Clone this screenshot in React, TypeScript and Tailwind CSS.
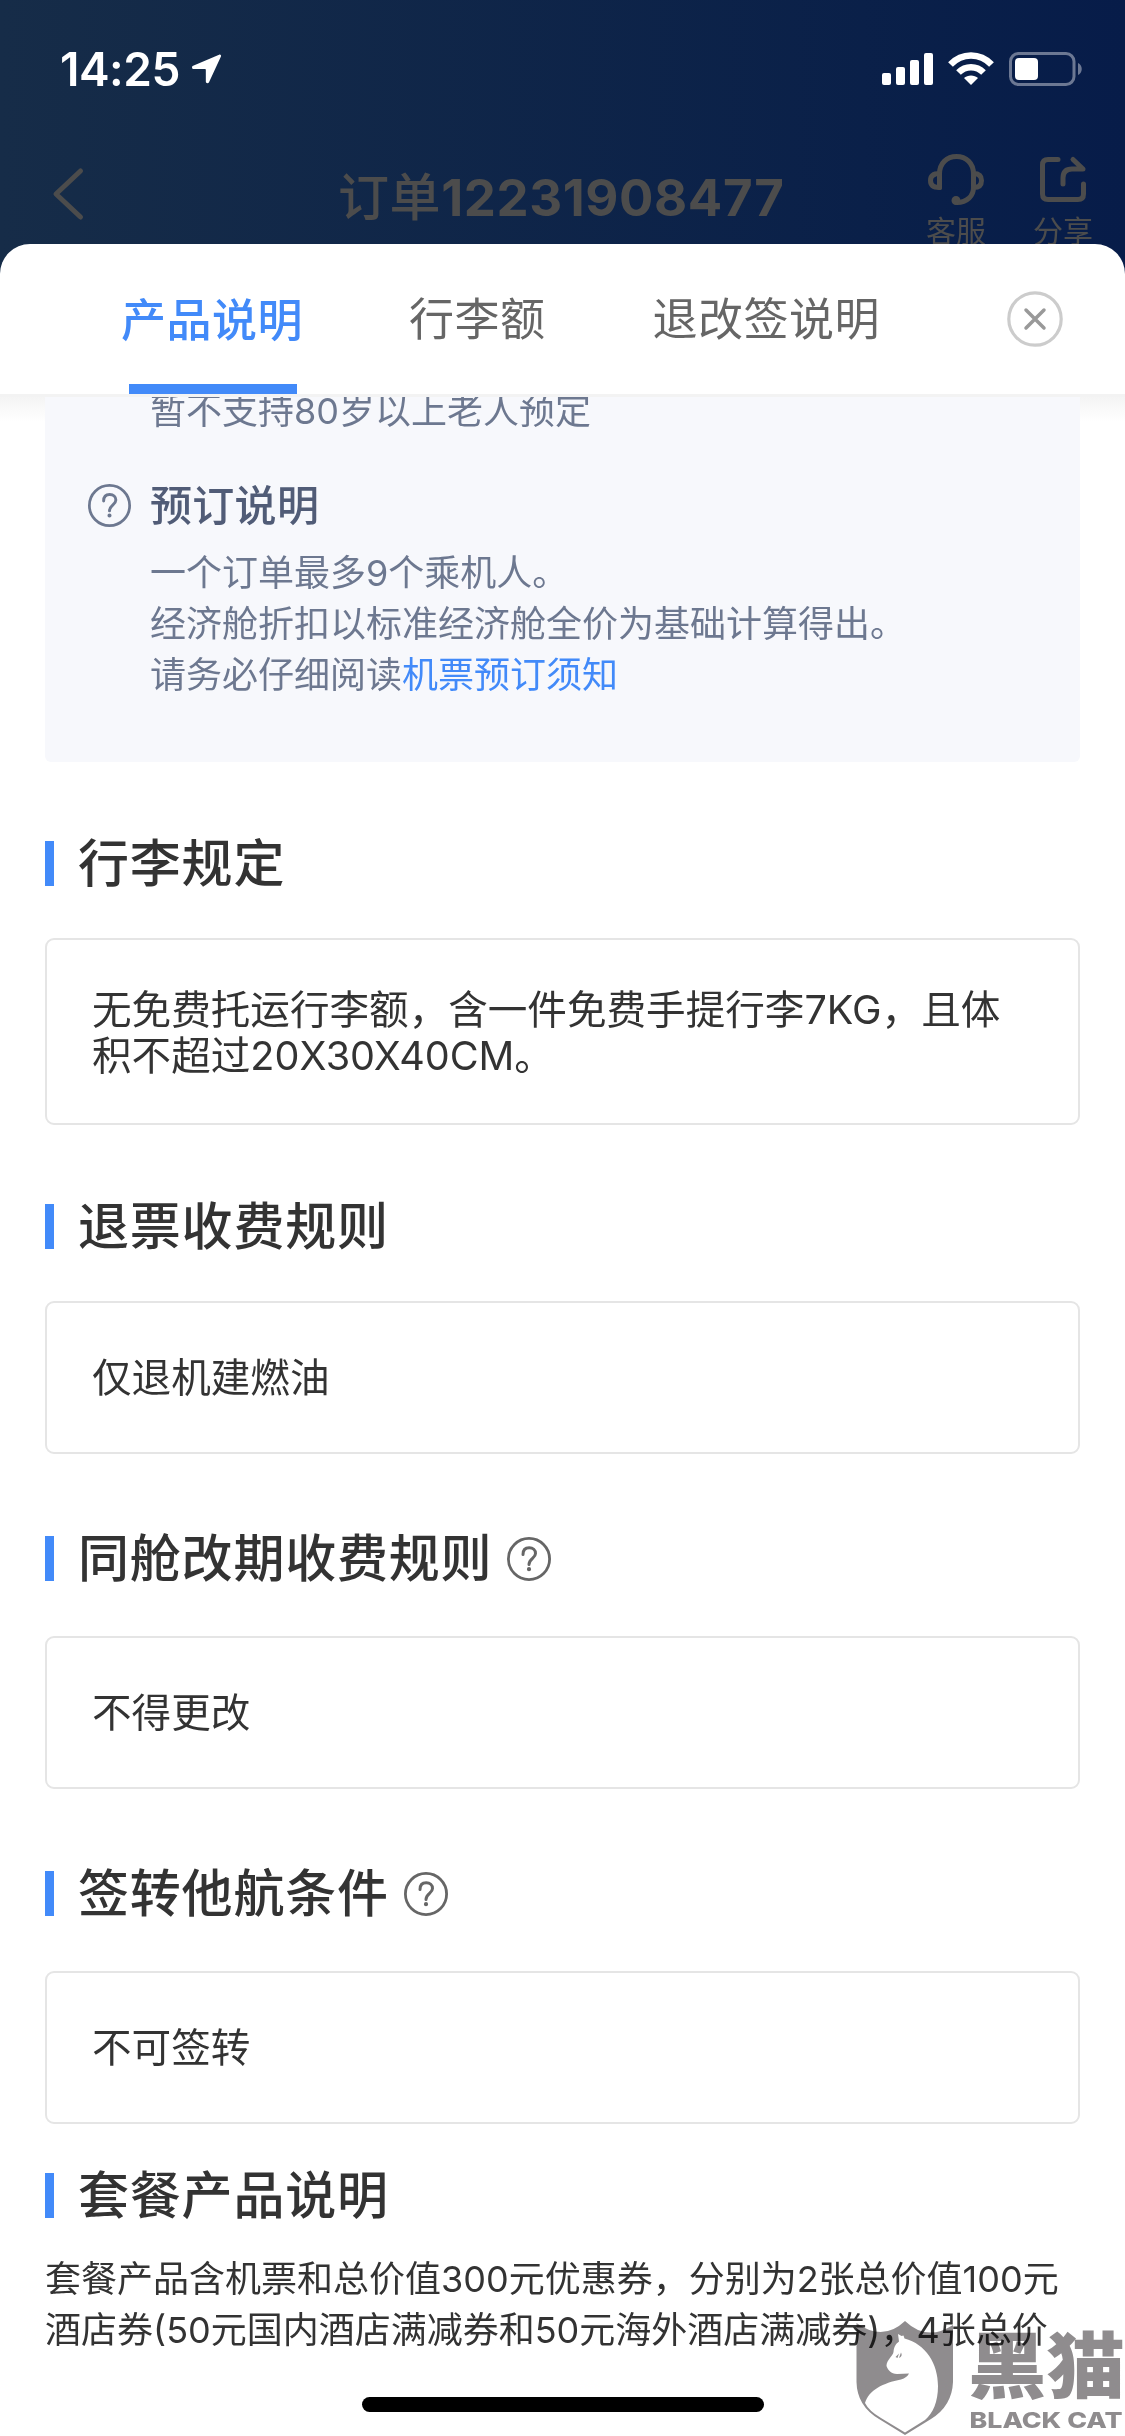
import { ReactNode } from "react";

const QuestionIcon = ({ size }: { size: number }) => {
    return (
        <svg width={size} height={size} viewBox="0 0 44 44" fill="none" stroke="currentColor" strokeLinecap="round">
            <circle cx="22" cy="22" r="20.6" strokeWidth="2.8" />
            <path d="M16 17.4C16 13 18.500 10.700 22.200 10.700C26 10.700 28.500 13 28.500 16.400C28.500 21.200 22 21.500 22 27.500" strokeWidth="3" />
            <circle cx="22" cy="32.200" r="1.200" fill="currentColor" strokeWidth="1.8" />
        </svg>
    );
};

const StatusBar = () => {
    return (
        <div className="flex h-[137px] items-center justify-between pr-[43px] pl-[60px] text-white">
            <div className="flex items-center gap-[11px]">
                <span className="text-[46px] leading-[46px] font-semibold tracking-[-0.5px]">14:25</span>
                <svg width="31" height="32" viewBox="0 0 32 32" fill="currentColor">
                    <path d="M29 1.2L2.2 12.6C.4 13.4.9 16 2.8 16H14.5C15 16 15.3 16.3 15.3 16.8V29C15.3 31 17.8 31.4 18.6 29.7L30.9 3.2C31.5 1.8 30.4.6 29 1.2Z" />
                </svg>
            </div>
            <svg width="200" height="34" viewBox="882 52 200 34" fill="currentColor">
                <rect x="882" y="73" width="9" height="12" rx="2" />
                <rect x="896" y="67" width="9" height="18" rx="2" />
                <rect x="910" y="60" width="9" height="25" rx="2" />
                <rect x="924" y="53" width="9" height="32" rx="2" />
                <path d="M971 85L978 78C974.500 74.500 967.500 74.500 964 78Z" />
                <g fill="none" stroke="currentColor" strokeWidth="6.6">
                    <path d="M950.500 64.500C962 52.500 980 52.500 991.500 64.500" />
                    <path d="M958.500 72.500C965.500 65.500 976.500 65.500 983.500 72.500" />
                </g>
                <rect x="1010.500" y="53.500" width="63.500" height="31" rx="8" fill="none" stroke="#6c7893" strokeWidth="3" />
                <rect x="1015" y="58" width="23" height="22" rx="4" />
                <path d="M1078 63C1083 65 1083 73 1078 75Z" fill="#6c7893" />
            </svg>
        </div>
    );
};

const NavBar = () => {
    return (
        <div className="flex h-[107px] items-start overflow-hidden pr-[32px] pl-[52px] text-[#4c4c4c]">
            <svg className="mt-[30px]" width="34" height="54" viewBox="0 0 34 54" fill="none" stroke="currentColor" strokeWidth="5" strokeLinecap="round" strokeLinejoin="round">
                <path d="M28.500 4L4 27L28.500 50" />
            </svg>
            <h1 className="mt-[29px] ml-[252px] text-[51px] leading-[64px] font-medium tracking-[0.6px]">
                订单<span className="font-bold">12231908477</span>
            </h1>
            <div className="ml-auto flex gap-[47px] text-[30px] leading-[36px]">
                <div className="flex flex-col items-center">
                    <svg className="mt-[15px]" width="60" height="56" viewBox="926 152 60 56" fill="none" stroke="currentColor" strokeWidth="5" strokeLinecap="round" strokeLinejoin="round">
                        <path d="M939.500 187.500V174C939.500 163 947 156.500 956.500 156.500C966 156.500 973.500 163 973.500 174V187.500C973.500 196 967 202.500 957 202.500" />
                        <path d="M939.500 173.500C933 173.500 930.500 176 930.500 180.500C930.500 185 933 187.500 939.500 187.500" />
                        <path d="M973.500 173.500C979 173.500 981.500 176 981.500 180.500C981.500 185 979 187.500 973.500 187.500" />
                        <circle cx="956" cy="200.500" r="2" fill="currentColor" />
                    </svg>
                    <span className="mt-[5px]">客服</span>
                </div>
                <div className="flex flex-col items-center">
                    <svg className="mt-[15px]" width="60" height="56" viewBox="1033 152 60 56" fill="none" stroke="currentColor" strokeWidth="5" strokeLinecap="round" strokeLinejoin="round">
                        <path d="M1058 159.500H1048C1044 159.500 1042.500 161.500 1042.500 165V194C1042.500 197.500 1044.500 199.500 1048 199.500H1078C1081.500 199.500 1083.500 197.500 1083.500 194V184" />
                        <path d="M1063 184V178C1063 172 1066 169 1072 169H1083L1073 159.500" />
                    </svg>
                    <span className="mt-[5px]">分享</span>
                </div>
            </div>
        </div>
    );
};

const Tabs = () => {
    return (
        <div className="flex h-[150px] items-center rounded-t-[30px] bg-white pl-[121px] text-[45px] leading-[60px] tracking-[0.5px] text-[#666]">
            <div className="flex h-[150px] w-[182px] flex-col items-center text-[#428af9]">
                <span className="mt-[47px] font-medium">产品说明</span>
                <span className="mt-auto ml-[2px] h-[10px] w-[168px] bg-[#428af9]" />
            </div>
            <span className="mt-[2px] ml-[106px]">行李额</span>
            <span className="mt-[2px] ml-[107px]">退改签说明</span>
            <button className="mr-[61px] ml-auto">
                <svg width="58" height="58" viewBox="0 0 58 58" fill="none" strokeLinecap="round">
                    <circle cx="29" cy="29" r="26.200" stroke="#ccc" strokeWidth="3.200" />
                    <path d="M20 20L38 38M38 20L20 38" stroke="#999" strokeWidth="3.500" />
                </svg>
            </button>
        </div>
    );
};

type SectionProps = {
    title: string;
    help?: boolean;
    children: ReactNode;
};

const SectionTitle = ({ title, help }: { title: string; help?: boolean }) => {
    return (
        <h2 className="flex h-[45px] items-center text-[51px] font-medium text-[#333]">
            <span className="mr-[24px] h-[45px] w-[9px] bg-[#428af9]" />
            <span className="mt-px tracking-[0.8px]">{title}</span>
            {help && (
                <span className="ml-[15px] text-[#666]">
                    <QuestionIcon size={44} />
                </span>
            )}
        </h2>
    );
};

const Section = ({ title, help, children }: SectionProps) => {
    return (
        <section>
            <SectionTitle title={title} help={help} />
            {children}
        </section>
    );
};

const cardClass = "rounded-[9px] border-2 border-[#e5e5e5] bg-white px-[45px] text-[39.6px] leading-[46px] text-[#333]";

// watermark over the bottom right corner
const BlackCat = () => {
    return (
        <svg className="absolute right-0 bottom-0 mix-blend-multiply" width="280" height="126" viewBox="0 0 280 126" fill="#8f8c8e">
            <path d="M11.500 13Q38 32 60 11Q82 32 108 15V72Q107 96 86 109L60 125L34 109Q12 96 11.500 72Z" />
            <path
                d="M53 24L56.500 26L58.500 25.500L59.500 28.500C81 34 93 54 93 76C93 92 88 103 80 110L60 122.500L36 108Q24 101 20 93C24 80 38 73 56 69.500Q62 67.500 64 63.500L52 64C46 64 43 60 41.500 56C41.500 50 48 46 48.500 42C49 36 51 34 54 31.500Z"
                fill="#fff"
            />
            <path d="M50.500 47L54 43.500L52.500 48ZM54 48L56 42.500Q58 46 54 48Z" />
            <text x="123" y="82" fontSize="72" fontWeight="900" textLength="157" lengthAdjust="spacingAndGlyphs" className="font-['Noto_Sans_CJK_SC',sans-serif]">
                黑猫
            </text>
            <text x="124.500" y="118" fontSize="22" fontWeight="800" textLength="153" lengthAdjust="spacingAndGlyphs">
                BLACK CAT
            </text>
        </svg>
    );
};

const App = () => {
    return (
        <div className="relative flex h-[2436px] w-[1125px] flex-col overflow-hidden bg-gradient-to-r from-[#162c48] to-[#071c49] font-['Inter','Noto_Sans_CJK_SC',sans-serif]">
            <StatusBar />
            <NavBar />
            <Tabs />
            <main className="h-[1970px] overflow-hidden bg-white bg-[linear-gradient(#f3f3f3,#ffffff_28px)] px-[45px]">
                <div className="-mx-[45px] h-[3px] bg-[#f3f3f3]" />
                <div className="h-[365px] overflow-hidden rounded-b-[6px] bg-[#f7f8fc] pl-[105px] text-[36px] leading-[51px] text-[#6d7890]">
                    <p className="-mt-[11px]">暂不支持80岁以上老人预定</p>
                    <div className="mt-[38px] -ml-[62px] flex h-[60px] items-center">
                        <QuestionIcon size={43} />
                        <h3 className="ml-[19px] text-[42px] font-medium tracking-[0.3px] text-[#515c77]">预订说明</h3>
                    </div>
                    <p className="mt-[13px]">一个订单最多9个乘机人。</p>
                    <p>经济舱折扣以标准经济舱全价为基础计算得出。</p>
                    <p>
                        请务必仔细阅读<a className="text-[#428af9]">机票预订须知</a>
                    </p>
                </div>
                <div className="mt-[79px] flex flex-col">
                    <Section title="行李规定">
                        <div className={cardClass + " mt-[52px] h-[187px] pt-[47px]"}>
                            无免费托运行李额，含一件免费手提行李7KG，且体
                            <br />
                            积不超过20X30X40CM。
                        </div>
                    </Section>
                    <div className="h-[79px]" />
                    <Section title="退票收费规则">
                        <div className={cardClass + " mt-[52px] flex h-[153px] items-center"}>仅退机建燃油</div>
                    </Section>
                    <div className="h-[82px]" />
                    <Section title="同舱改期收费规则" help>
                        <div className={cardClass + " mt-[55px] flex h-[153px] items-center"}>不得更改</div>
                    </Section>
                    <div className="h-[82px]" />
                    <Section title="签转他航条件" help>
                        <div className={cardClass + " mt-[55px] flex h-[153px] items-center"}>不可签转</div>
                    </Section>
                    <div className="h-[49px]" />
                    <SectionTitle title="套餐产品说明" />
                    <p className="mt-[36px] text-[36px] leading-[51px] whitespace-nowrap text-[#333]">
                        套餐产品含机票和总价值300元优惠券，分别为2张总价值100元
                        <br />
                        酒店券(50元国内酒店满减券和50元海外酒店满减券)，4张总价
                    </p>
                </div>
            </main>
            <footer className="flex h-[72px] justify-center bg-white">
                <div className="mt-[33px] h-[15px] w-[402px] rounded-full bg-black" />
            </footer>
            <BlackCat />
        </div>
    );
};

export default App;
